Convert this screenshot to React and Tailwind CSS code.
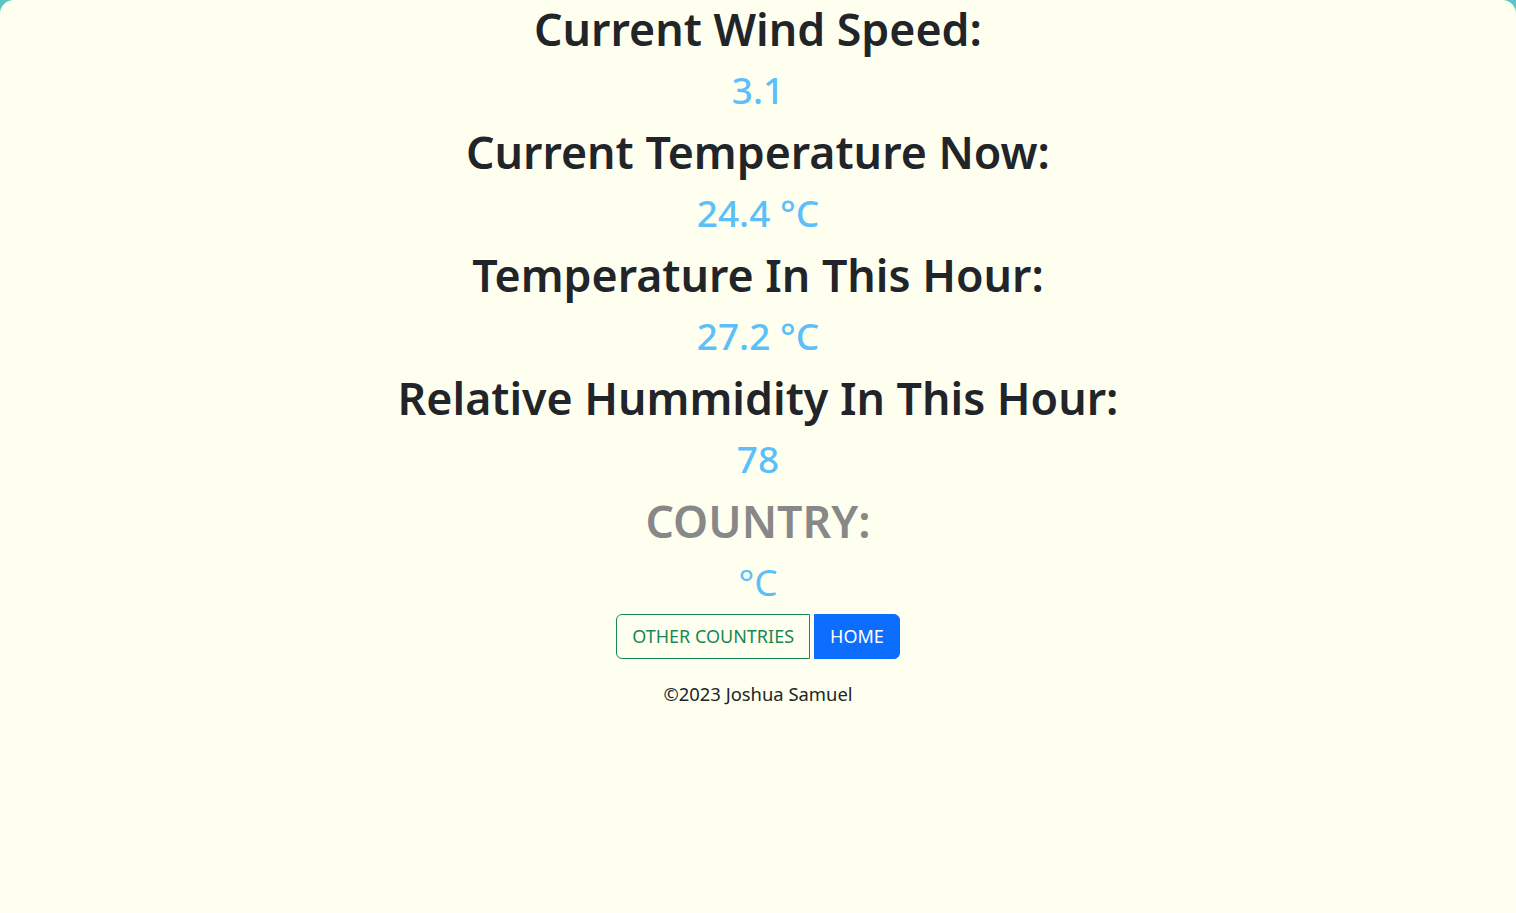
export default function App() {
  const rows = [
    { label: "Current Wind Speed:", value: "3.1" },
    { label: "Current Temperature Now:", value: "24.4 °C" },
    { label: "Temperature In This Hour:", value: "27.2 °C" },
    { label: "Relative Hummidity In This Hour:", value: "78" },
  ];

  return (
    <div className="min-h-screen bg-[#5cc6c6]">
      <div
        className="min-h-[940px] rounded-t-[14px] bg-[#fffff0] text-center text-[#212529]"
        style={{ fontFamily: '"Noto Sans", "Open Sans", sans-serif' }}
      >
        {rows.map((row) => (
          <div key={row.label}>
            <h1 className="mb-2 text-[44.7px] font-semibold leading-[58px]">{row.label}</h1>
            <h2 className="mb-[9px] text-[37px] font-medium leading-[48px] text-[#5cbff9]">{row.value}</h2>
          </div>
        ))}
        <h1 className="mb-2 text-[44.7px] font-semibold leading-[58px] text-[#888888]">COUNTRY:</h1>
        <h2 className="mb-[9px] text-[37px] font-normal leading-[48px] text-[#5cbff9]">°C</h2>

        <div className="-mt-px flex justify-center gap-1">
          <button className="h-[45px] rounded-l-md border border-[#198754] px-[15px] text-[18px] text-[#198754]">
            OTHER COUNTRIES
          </button>
          <button className="h-[45px] rounded-r-md border border-[#0d6efd] bg-[#0d6efd] px-[15px] text-[18px] text-white">
            HOME
          </button>
        </div>

        <p className="mt-[21px] text-[18.4px]">©2023 Joshua Samuel</p>
      </div>
    </div>
  );
}
